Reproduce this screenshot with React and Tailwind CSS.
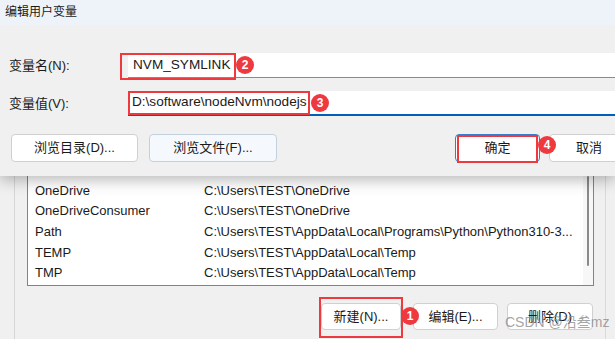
import React from "react";

const font = { fontFamily: '"Liberation Sans", "Noto Sans CJK SC", sans-serif' };

function Badge({n, className}) {
    return (
        <span className={"absolute z-20 flex items-center justify-center w-[18px] h-[18px] rounded-full bg-[#ee3a3f] text-white text-[12px] font-bold leading-none " + className}>
            {n}
        </span>
    );
}

function Btn({children, className = ""}) {
    return (
        <div className={"shrink-0 flex items-center justify-center rounded-[4px] border text-[13px] text-[#1a1a1a] " + className}>
            {children}
        </div>
    );
}

const rows = [
    ["OneDrive", "C:\\Users\\TEST\\OneDrive"],
    ["OneDriveConsumer", "C:\\Users\\TEST\\OneDrive"],
    ["Path", "C:\\Users\\TEST\\AppData\\Local\\Programs\\Python\\Python310-3..."],
    ["TEMP", "C:\\Users\\TEST\\AppData\\Local\\Temp"],
    ["TMP", "C:\\Users\\TEST\\AppData\\Local\\Temp"],
];

export default function App() {
    return (
        <div className="relative w-[615px] h-[339px] overflow-hidden bg-[#f0f0f0]" style={font}>
            {/* edit dialog */}
            <div className="relative z-10 h-[176px] bg-[#f0f0f0] shadow-[0_4px_14px_rgba(0,0,0,0.28)]">
                <div className="h-[25px] bg-[#eef2f9] pl-[5px] pt-[3px] text-[12px] text-[#1a1a1a]">编辑用户变量</div>

                <div className="flex items-center h-[25px] mt-[28px]">
                    <span className="shrink-0 w-[128px] pl-[9px] text-[13px] text-[#1a1a1a]">变量名(N):</span>
                    <div className="relative flex-1 h-[25px] bg-white border-b border-[#8a8a8a] pl-[5px] flex items-center text-[13.6px] text-[#1a1a1a]">
                        NVM_SYMLINK
                        <div className="absolute left-[-8px] top-[0px] w-[116px] h-[27px] border-2 border-[#ee3a3f]"></div>
                        <Badge n="2" className="left-[108px] top-[3px]" />
                    </div>
                </div>

                <div className="flex items-center h-[25px] mt-[13px]">
                    <span className="shrink-0 w-[128px] pl-[9px] text-[13px] text-[#1a1a1a]">变量值(V):</span>
                    <div className="relative flex-1 h-[25px] bg-white border-b-2 border-[#005fb8] pl-[4px] flex items-center text-[13.6px] text-[#1a1a1a] whitespace-nowrap">
                        D:\software\nodeNvm\nodejs<span className="ml-px w-px h-[17px] bg-black"></span>
                        <div className="absolute left-0 top-0 w-[182px] h-[24px] border-2 border-[#ee3a3f]"></div>
                        <Badge n="3" className="left-[183px] top-[3px]" />
                    </div>
                </div>

                <div className="flex items-center mt-[18px] h-[28px]">
                    <Btn className="ml-[11px] w-[127px] h-[28px] bg-white border-[#d0d0d0]">浏览目录(D)...</Btn>
                    <Btn className="ml-[11px] w-[128px] h-[28px] bg-[#f5f8fc] border-[#c3d0de]">浏览文件(F)...</Btn>
                    <div className="relative shrink-0 ml-[178px] w-[85px] h-[28px]">
                        <Btn className="w-full h-full bg-white border-[#3a7cc9]">确定</Btn>
                        <div className="absolute left-[2px] top-[1px] w-[81px] h-[28px] border-2 border-[#ee3a3f]"></div>
                        <Badge n="4" className="left-[83px] top-[2px]" />
                    </div>
                    <Btn className="ml-[9px] w-[80px] h-[28px] bg-white border-[#d0d0d0]">取消</Btn>
                </div>
            </div>

            {/* underlying environment variables window */}
            <div className="absolute left-[14px] top-[170px] w-px h-[169px] bg-[#d6d6d6]"></div>
            <div className="absolute left-[605px] top-[170px] w-px h-[169px] bg-[#dadada]"></div>
            <div className="flex mt-[-2px]">
                <div className="ml-[27px] w-[567px] h-[112px] bg-white border border-[#838383] flex">
                    <div className="flex-1 pt-[5px]">
                        {rows.map(([k, v]) => (
                            <div key={k} className="flex items-center h-[20.7px] text-[13px] text-[#1a1a1a] whitespace-nowrap">
                                <span className="shrink-0 w-[176px] pl-[7px]">{k}</span>
                                <span>{v}</span>
                            </div>
                        ))}
                    </div>
                    <div className="shrink-0 w-[10px] flex justify-center bg-[#f7f7f7]">
                        <div className="w-[2px] h-[90px] bg-[#8a8a8a] rounded-full mt-[1px]"></div>
                    </div>
                </div>
            </div>

            <div className="flex items-center mt-[17px] h-[27px]">
                <div className="relative shrink-0 ml-[321px] w-[80px] h-[27px]">
                    <Btn className="w-full h-full bg-white border-[#d0d0d0]">新建(N)...</Btn>
                    <div className="absolute left-[-2px] top-[-6px] w-[84px] h-[41px] border-2 border-[#ee3a3f]"></div>
                    <Badge n="1" className="left-[80px] top-[4px]" />
                </div>
                <Btn className="ml-[12px] w-[85px] h-[27px] bg-white border-[#d0d0d0]">编辑(E)...</Btn>
                <Btn className="ml-[9px] w-[86px] h-[27px] bg-white border-[#d0d0d0]">删除(D)</Btn>
            </div>
            <span className="absolute left-[505px] top-[312px] text-[14px] text-[#8c8c8c]/80 whitespace-nowrap">CSDN @沿叁mz</span>
        </div>
    );
}
